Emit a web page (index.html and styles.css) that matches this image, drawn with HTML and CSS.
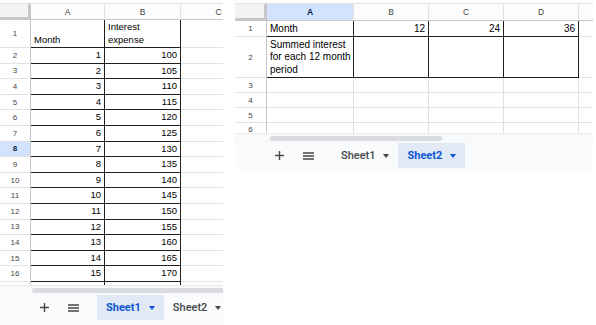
FILE: index.html
```html
<!DOCTYPE html>
<html lang="en">
<head>
    <meta charset="UTF-8">
    <title>Interest sheets</title>
    <link rel="stylesheet" href="styles.css">
</head>
<body>
<div class="page">

    <!-- first workbook: monthly interest -->
    <section class="sheet sheet-left">
        <div class="grid grid-left">
            <div class="corner"></div><div class="ch">A</div><div class="ch">B</div><div class="ch">C</div>
            <div class="rh">1</div><div class="c bx">Month</div><div class="c bx">Interest<br>expense</div><div class="c"></div>
            <div class="rh">2</div><div class="c num bx">1</div><div class="c num bx">100</div><div class="c"></div>
            <div class="rh">3</div><div class="c num bx">2</div><div class="c num bx">105</div><div class="c"></div>
            <div class="rh">4</div><div class="c num bx">3</div><div class="c num bx">110</div><div class="c"></div>
            <div class="rh">5</div><div class="c num bx">4</div><div class="c num bx">115</div><div class="c"></div>
            <div class="rh">6</div><div class="c num bx">5</div><div class="c num bx">120</div><div class="c"></div>
            <div class="rh">7</div><div class="c num bx">6</div><div class="c num bx">125</div><div class="c"></div>
            <div class="rh sel">8</div><div class="c num bx">7</div><div class="c num bx">130</div><div class="c"></div>
            <div class="rh">9</div><div class="c num bx">8</div><div class="c num bx">135</div><div class="c"></div>
            <div class="rh">10</div><div class="c num bx">9</div><div class="c num bx">140</div><div class="c"></div>
            <div class="rh">11</div><div class="c num bx">10</div><div class="c num bx">145</div><div class="c"></div>
            <div class="rh">12</div><div class="c num bx">11</div><div class="c num bx">150</div><div class="c"></div>
            <div class="rh">13</div><div class="c num bx">12</div><div class="c num bx">155</div><div class="c"></div>
            <div class="rh">14</div><div class="c num bx">13</div><div class="c num bx">160</div><div class="c"></div>
            <div class="rh">15</div><div class="c num bx">14</div><div class="c num bx">165</div><div class="c"></div>
            <div class="rh">16</div><div class="c num bx">15</div><div class="c num bx">170</div><div class="c"></div>
            <div class="rh"></div><div class="c br"></div><div class="c br"></div><div class="c"></div>
        </div>
        <div class="hscroll"><div class="thumb thumb-left"></div></div>
        <div class="tabbar">
            <span class="tool">
                <svg width="9" height="9" viewBox="0 0 9 9"><path d="M4.5 0v9M0 4.5h9" stroke="#444746" stroke-width="1.4"/></svg>
            </span>
            <span class="tool">
                <svg width="11" height="8" viewBox="0 0 11 8"><path d="M0 1h11M0 4h11M0 7h11" stroke="#444746" stroke-width="1.3"/></svg>
            </span>
            <span class="tab active">Sheet1<i class="caret"></i></span>
            <span class="tab">Sheet2<i class="caret"></i></span>
        </div>
    </section>

    <!-- second workbook: yearly sums -->
    <section class="sheet sheet-right">
        <div class="grid grid-right">
            <div class="corner"></div><div class="ch sel">A</div><div class="ch">B</div><div class="ch">C</div><div class="ch">D</div><div class="ch"></div>
            <div class="rh">1</div><div class="c bx">Month</div><div class="c num bx">12</div><div class="c num bx">24</div><div class="c num bx">36</div><div class="c"></div>
            <div class="rh">2</div><div class="c bx">Summed interest<br>for each 12 month<br>period</div><div class="c bx"></div><div class="c bx"></div><div class="c bx"></div><div class="c"></div>
            <div class="rh">3</div><div class="c"></div><div class="c"></div><div class="c"></div><div class="c"></div><div class="c"></div>
            <div class="rh">4</div><div class="c"></div><div class="c"></div><div class="c"></div><div class="c"></div><div class="c"></div>
            <div class="rh">5</div><div class="c"></div><div class="c"></div><div class="c"></div><div class="c"></div><div class="c"></div>
            <div class="rh rh-cut">6</div><div class="c"></div><div class="c"></div><div class="c"></div><div class="c"></div><div class="c"></div>
        </div>
        <div class="hscroll"><div class="thumb thumb-right"></div></div>
        <div class="tabbar">
            <span class="tool">
                <svg width="9" height="9" viewBox="0 0 9 9"><path d="M4.5 0v9M0 4.5h9" stroke="#444746" stroke-width="1.4"/></svg>
            </span>
            <span class="tool">
                <svg width="11" height="8" viewBox="0 0 11 8"><path d="M0 1h11M0 4h11M0 7h11" stroke="#444746" stroke-width="1.3"/></svg>
            </span>
            <span class="tab">Sheet1<i class="caret"></i></span>
            <span class="tab active">Sheet2<i class="caret"></i></span>
        </div>
    </section>

</div>
</body>
</html>
```

FILE: styles.css
```css
body {
    margin: 0;
    background: #fff;
    color: #000;
    font-family: "Liberation Sans", Arial, sans-serif;
}
.page {
    display: flex;
    align-items: flex-start;
    gap: 12px;
    padding-top: 3px;
}
.sheet {
    display: flex;
    flex-direction: column;
    overflow: hidden;
    flex: none;
}
.sheet-left {
    width: 223px;
    height: 322px;
}
.sheet-right {
    width: 358px;
    height: 167px;
}

/* cell grid */
.grid {
    display: grid;
    overflow: hidden;
    flex: none;
}
.grid-left {
    height: 282px;
    grid-template-columns: 31px 74px 76px 76px;
    grid-template-rows: 17px 28px repeat(16, 15.6px);
    font-size: 9.5px;
}
.grid-right {
    height: 130px;
    grid-template-columns: 32px 87px 75px 75px 75px 60px;
    grid-template-rows: 18px 16px 41px repeat(4, 15px);
    font-size: 10px;
}
.grid > div {
    box-sizing: border-box;
    min-width: 0;
}
.corner {
    background: #f1f3f4;
    border-top: 1px solid #e3e3e3;
    border-right: 3px solid #c7c7c7;
    border-bottom: 3px solid #c7c7c7;
}
.ch {
    display: flex;
    align-items: center;
    justify-content: center;
    border-top: 1px solid #e3e3e3;
    border-right: 1px solid #e1e1e1;
    border-bottom: 1px solid #c7c7c7;
    background: #fcfcfc;
    color: #444;
    font-size: 8.5px;
}
.rh {
    display: flex;
    align-items: center;
    justify-content: center;
    border-right: 1px solid #c7c7c7;
    border-bottom: 1px solid #e1e1e1;
    background: #fff;
    color: #444;
    font-size: 8px;
}
.rh-cut {
    align-items: flex-start;
    padding-top: 2px;
}
.sel {
    background: #d3e3fd;
    color: #041e49;
    font-weight: bold;
}
.c {
    display: flex;
    align-items: flex-end;
    padding: 0 3px 1px 3px;
    border-right: 1px solid #e1e1e1;
    border-bottom: 1px solid #e1e1e1;
    line-height: 12.5px;
    white-space: nowrap;
    overflow: hidden;
}
.num {
    justify-content: flex-end;
}
.grid > .bx {
    border-right-color: #1f1f1f;
    border-bottom-color: #1f1f1f;
}
.grid > .br {
    border-right-color: #1f1f1f;
}

/* scroll strip */
.hscroll {
    flex: none;
    height: 10px;
    display: flex;
    align-items: center;
    background: #f8f9fa;
    border-top: 1px solid #ececec;
    box-sizing: border-box;
}
.thumb {
    flex: none;
    height: 5px;
    border-radius: 3px;
    background: #dadce0;
}
.thumb-left {
    margin-left: 32px;
    width: 240px;
}
.thumb-right {
    margin-left: 35px;
    width: 172px;
}

/* sheet tabs */
.tabbar {
    flex: 1;
    display: flex;
    align-items: flex-start;
    padding-left: 32px;
    background: #f9fbfd;
}
.tool {
    flex: none;
    width: 24px;
    height: 25px;
    display: flex;
    align-items: center;
    justify-content: center;
    margin-right: 5px;
}
.tool + .tool {
    margin-right: 12px;
}
.tab {
    flex: none;
    height: 25px;
    display: flex;
    align-items: center;
    gap: 8px;
    padding: 0 9px;
    font-family: Roboto, "Liberation Sans", sans-serif;
    font-weight: 500;
    font-size: 11px;
    color: #444746;
    white-space: nowrap;
}
.tab.active {
    background: #e1e9f7;
    color: #0b57d0;
    font-weight: bold;
}
.caret {
    width: 0;
    height: 0;
    border-left: 3.5px solid transparent;
    border-right: 3.5px solid transparent;
    border-top: 4px solid currentColor;
}
```
